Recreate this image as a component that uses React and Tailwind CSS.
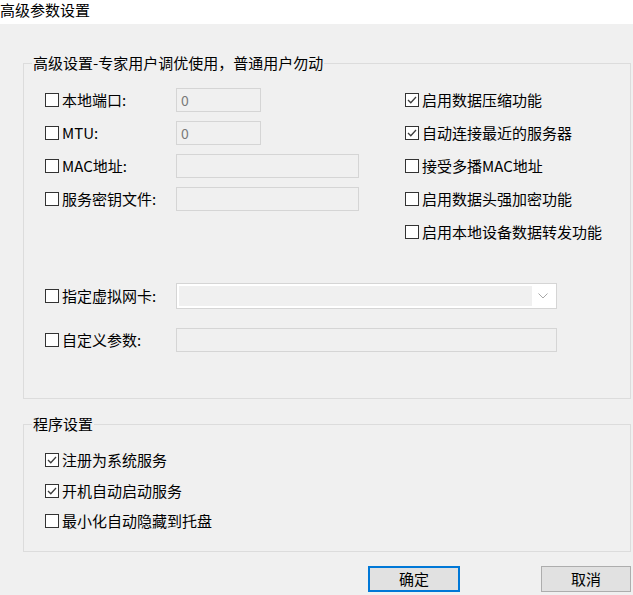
import React from 'react'

const font = { fontFamily: '"Noto Sans CJK SC", "Noto Sans", sans-serif' }

const CheckBox = ({ checked }) => (
  <span className="w-[14px] h-[14px] border border-[#333333] bg-white flex items-center justify-center shrink-0">
    {checked && (
      <svg width="12" height="12" viewBox="0 0 12 12">
        <path d="M2 6 L4.8 8.8 L10 3" fill="none" stroke="#3c3c3c" strokeWidth="1.3" />
      </svg>
    )}
  </span>
)

const Check = ({ label, checked, className = '' }) => (
  <label className={`flex items-center gap-[3px] ${className}`}>
    <CheckBox checked={checked} />
    <span className="text-black">{label}</span>
  </label>
)

const TextBox = ({ value, width }) => (
  <div className={`${width} h-[24px] border border-[#d5d5d5] bg-[#f0f0f0] flex items-center pl-[4px] text-[#7a7a7a] text-[14px]`}>
    {value}
  </div>
)

const AdvancedSettings = () => {
  const leftRows = [
    { label: '本地端口:', value: '0', width: 'w-[85px]' },
    { label: 'MTU:', value: '0', width: 'w-[85px]' },
    { label: 'MAC地址:', value: '', width: 'w-[183px]' },
    { label: '服务密钥文件:', value: '', width: 'w-[183px]' },
  ]

  const rightRows = [
    { label: '启用数据压缩功能', checked: true },
    { label: '自动连接最近的服务器', checked: true },
    { label: '接受多播MAC地址', checked: false },
    { label: '启用数据头强加密功能', checked: false },
    { label: '启用本地设备数据转发功能', checked: false },
  ]

  const programRows = [
    { label: '注册为系统服务', checked: true },
    { label: '开机自动启动服务', checked: true },
    { label: '最小化自动隐藏到托盘', checked: false },
  ]

  return (
    <div className="w-[633px] h-[595px] flex flex-col text-[15px] leading-[20px] text-black overflow-hidden" style={font}>
      <div className="h-[24px] bg-white shrink-0">
        <span className="block">高级参数设置</span>
      </div>

      <div className="flex-1 bg-[#f0f0f0] pl-[23px] pr-[2px]">
        {/* advanced group */}
        <fieldset className="mt-[29px] border border-[#dcdcdc] pl-[21px] pt-[10px] pb-[36px] m-0">
          <legend className="-ml-[13px] px-[1px]">高级设置-专家用户调优使用，普通用户勿动</legend>

          <div className="flex">
            <div className="w-[360px] flex flex-col">
              {leftRows.map((row) => (
                <div key={row.label} className="h-[33px] flex items-center">
                  <div className="w-[131px]">
                    <Check label={row.label} />
                  </div>
                  <TextBox value={row.value} width={row.width} />
                </div>
              ))}
            </div>
            <div className="flex flex-col">
              {rightRows.map((row) => (
                <div key={row.label} className="h-[33px] flex items-center">
                  <Check label={row.label} checked={row.checked} />
                </div>
              ))}
            </div>
          </div>

          <div className="mt-[26px] h-[44px] flex items-center">
            <div className="w-[131px]">
              <Check label="指定虚拟网卡:" />
            </div>
            <div className="w-[381px] h-[26px] border border-[#d5d5d5] bg-white p-[2px] flex">
              <div className="flex-1 bg-[#f0f0f0]" />
              <div className="w-[22px] flex items-center justify-center">
                <svg width="10" height="6" viewBox="0 0 10 6">
                  <path d="M0.5 0.5 L5 5 L9.5 0.5" fill="none" stroke="#a8a8a8" strokeWidth="1" />
                </svg>
              </div>
            </div>
          </div>

          <div className="h-[44px] flex items-center">
            <div className="w-[131px]">
              <Check label="自定义参数:" />
            </div>
            <TextBox value="" width="w-[381px]" />
          </div>
        </fieldset>

        {/* program group */}
        <fieldset className="mt-[15px] border border-[#dcdcdc] pl-[21px] pt-[11px] pb-[14px] m-0">
          <legend className="-ml-[13px] px-[1px]">程序设置</legend>
          {programRows.map((row) => (
            <div key={row.label} className="h-[30.5px] flex items-center">
              <Check label={row.label} checked={row.checked} />
            </div>
          ))}
        </fieldset>

        <div className="mt-[14px] flex justify-end gap-[81px]">
          <button className="w-[92px] h-[26px] border-2 border-[#0078d7] bg-[#e1e1e1] flex items-center justify-center">
            确定
          </button>
          <button className="w-[90px] h-[26px] border border-[#adadad] bg-[#e1e1e1] flex items-center justify-center">
            取消
          </button>
        </div>
      </div>
    </div>
  )
}

export default AdvancedSettings
